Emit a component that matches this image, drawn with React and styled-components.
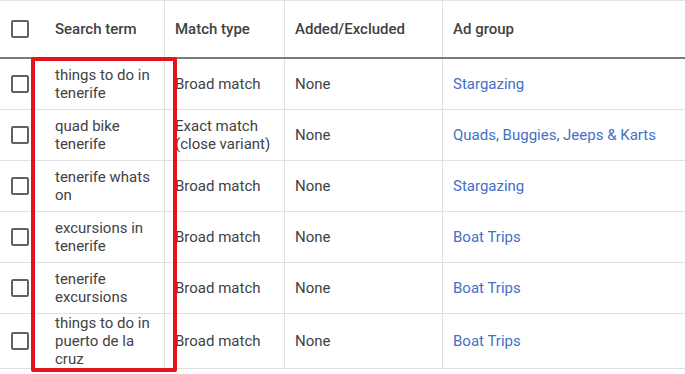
import React from 'react'
import styled, { createGlobalStyle } from 'styled-components'

const GlobalStyle = createGlobalStyle`
    body {
        margin: 0;
        background: #fff;
        font-family: Roboto, "Liberation Sans", Arial, sans-serif;
        color: #3c4043;
        overflow: hidden;
    }
`

const rows = [
    { term: 'things to do in tenerife', match: 'Broad match', added: 'None', group: 'Stargazing' },
    { term: 'quad bike tenerife', match: 'Exact match (close variant)', added: 'None', group: 'Quads, Buggies, Jeeps & Karts' },
    { term: 'tenerife whats on', match: 'Broad match', added: 'None', group: 'Stargazing' },
    { term: 'excursions in tenerife', match: 'Broad match', added: 'None', group: 'Boat Trips' },
    { term: 'tenerife excursions', match: 'Broad match', added: 'None', group: 'Boat Trips' },
    { term: 'things to do in puerto de la cruz', match: 'Broad match', added: 'None', group: 'Boat Trips' },
]

const Wrapper = styled.div`
    position: relative;
    width: 685px;
    min-height: 374px;
`

const Row = styled.div`
    display: grid;
    grid-template-columns: 44px 120px 120px 158px 1fr;
    min-height: ${props => props.header ? '56px' : '50px'};
    border-top: ${props => props.header ? '1px solid #e3e3e3' : 'none'};
    border-bottom: ${props => props.header ? '2px solid #7b7b7b' : '1px solid #e0e0e0'};
`

const Cell = styled.div`
    display: flex;
    align-items: center;
    padding: 0 10px 0 ${props => props.divided ? '10px' : '11px'};
    border-left: ${props => props.divided ? '1px solid #e0e0e0' : 'none'};
    font-size: 15px;
    line-height: 18px;
    font-weight: ${props => props.header ? 500 : 400};
    color: ${props => props.link ? '#4470c6' : '#3f4246'};
`

const Box = styled.span`
    display: block;
    box-sizing: border-box;
    width: 18px;
    height: 18px;
    border: 2px solid #616161;
    border-radius: 2px;
`

const Highlight = styled.div`
    position: absolute;
    left: 31px;
    top: 57px;
    width: 146px;
    height: 315px;
    box-sizing: border-box;
    border: 4px solid #e3141b;
    border-radius: 2px;
    pointer-events: none;
`

const App = () => {
    return (
        <Wrapper>
            <GlobalStyle />
            <Row header>
                <Cell><Box /></Cell>
                <Cell header>Search term</Cell>
                <Cell header divided>Match type</Cell>
                <Cell header divided>Added/Excluded</Cell>
                <Cell header divided>Ad group</Cell>
            </Row>
            {rows.map((row, index) =>
                <Row key={index}>
                    <Cell><Box /></Cell>
                    <Cell>{row.term}</Cell>
                    <Cell divided>{row.match}</Cell>
                    <Cell divided>{row.added}</Cell>
                    <Cell divided link>{row.group}</Cell>
                </Row>
            )}
            <Highlight />
        </Wrapper>
    )
}

export default App
